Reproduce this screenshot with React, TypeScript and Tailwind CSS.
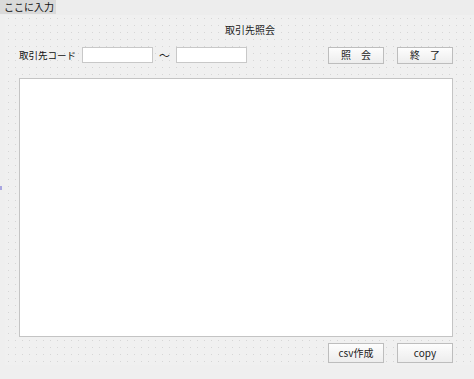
import React from "react";

const font = { fontFamily: '"Noto Sans CJK JP", "Liberation Sans", sans-serif' };

function Btn({ children, className = "" }: { children: React.ReactNode; className?: string }) {
  return (
    <button
      className={`h-[17px] w-[56px] border border-[#bdbdbd] bg-gradient-to-b from-[#fdfdfd] to-[#ededed] text-[10px] leading-none text-[#222] ${className}`}
    >
      {children}
    </button>
  );
}

export default function App() {
  return (
    <div className="relative h-[379px] w-[474px] overflow-hidden bg-[#efefef] text-[#222]" style={font}>
      <div className="flex h-[15px] bg-[#ededed]">
        <div className="flex h-[14px] w-[56px] items-center bg-[#dadada] pl-[4px] text-[10px] leading-none text-[#111]">
          ここに入力
        </div>
      </div>
      <div className="ml-[5px] h-[350px] bg-[#f0f0f0] bg-[radial-gradient(#d6d6d6_0.8px,transparent_1px)] bg-[size:7px_7px] pl-[14px] pr-[21px]">
        <div className="flex h-[28px] items-center justify-center pl-[28px] text-[10px]">取引先照会</div>
        <div className="mt-[3px] flex h-[18px] items-center">
          <span className="w-[63px] text-[9.5px] text-[#111]">取引先コード</span>
          <div className="h-[16px] w-[71px] border border-[#c8c8c8] bg-white" />
          <span className="w-[23px] text-center text-[11px]">〜</span>
          <div className="h-[16px] w-[71px] border border-[#c8c8c8] bg-white" />
          <div className="flex-1" />
          <Btn>照　会</Btn>
          <Btn className="ml-[13px]">終　了</Btn>
        </div>
        <div className="mt-[14px] h-[259px] border border-[#c4c4c4] bg-white" />
        <div className="mt-[6px] flex justify-end">
          <Btn className="h-[20px]">csv作成</Btn>
          <Btn className="ml-[13px] h-[20px]">copy</Btn>
        </div>
      </div>
      <div className="absolute left-0 top-[186px] h-[4px] w-[2px] bg-[#a9a6e0]" />
    </div>
  );
}
